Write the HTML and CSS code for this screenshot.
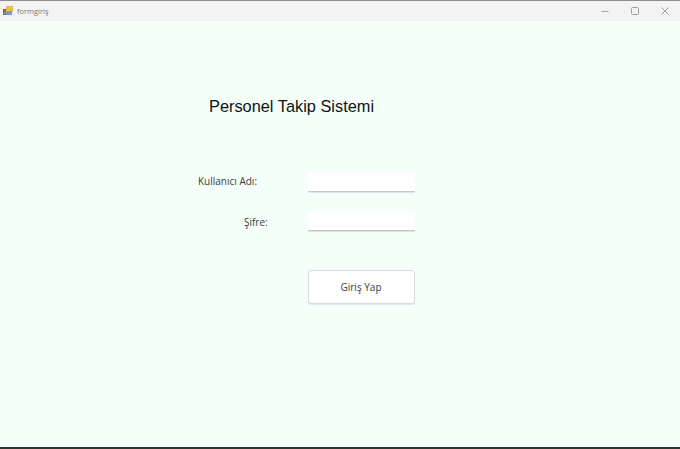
FILE: index.html
```html
<!DOCTYPE html>
<html lang="tr">
<head>
<meta charset="utf-8">
<title>formgiriş</title>
<link rel="stylesheet" href="styles.css">
</head>
<body>
<div class="window">
  <header class="titlebar">
    <div class="title-left">
      <svg class="app-icon" width="10" height="10" viewBox="0 0 10 10">
        <rect x="0" y="3" width="5" height="6" fill="#b5563a"/>
        <rect x="3" y="0" width="7" height="6" fill="#e8c04a"/>
        <rect x="4" y="5" width="5" height="4" fill="#6f9fd4"/>
        <rect x="1" y="6" width="3" height="3" fill="#7d8a95"/>
      </svg>
      <span class="app-name">formgiriş</span>
    </div>
    <div class="controls">
      <svg class="ctl" width="30" height="20" viewBox="0 0 30 20"><path d="M11.5 10.5h7" stroke="#a0a0a0" fill="none"/></svg>
      <svg class="ctl" width="30" height="20" viewBox="0 0 30 20"><rect x="11.5" y="6.5" width="7" height="7" rx="1" stroke="#a0a0a0" fill="none"/></svg>
      <svg class="ctl" width="30" height="20" viewBox="0 0 30 20"><path d="M11.5 6.5l7 7M18.5 6.5l-7 7" stroke="#a0a0a0" fill="none"/></svg>
    </div>
  </header>
  <main class="form">
    <h1 class="heading">Personel Takip Sistemi</h1>
    <div class="row row-user">
      <label class="label label-user">Kullanıcı Adı:</label>
      <input class="field" type="text">
    </div>
    <div class="row row-pass">
      <label class="label label-pass">Şifre:</label>
      <input class="field" type="password">
    </div>
    <button class="submit" type="button">Giriş Yap</button>
  </main>
</div>
</body>
</html>
```
FILE: styles.css
```css
* { box-sizing: border-box; }
html, body { margin: 0; padding: 0; }
body { width: 680px; height: 449px; overflow: hidden; background: #f4fff9; font-family: "Open Sans", "Noto Sans", sans-serif; }
.window { width: 680px; height: 449px; display: flex; flex-direction: column; border-top: 1px solid #8d8d8d; border-bottom: 2px solid #2e3432; }
.titlebar { height: 20px; flex: none; background: #f3f3f3; display: flex; align-items: center; justify-content: space-between; padding-left: 3px; }
.title-left { display: flex; align-items: center; gap: 4px; }
.app-icon { display: block; }
.app-name { font-size: 7.5px; color: #777; }
.controls { display: flex; }
.ctl { display: block; }
.form { flex: 1; display: flex; flex-direction: column; padding-left: 308px; }
.heading { margin: 75px 0 0 -99px; font: 400 16.35px/20px "Liberation Sans", Arial, sans-serif; color: #111; height: 20px; white-space: nowrap; }
.row { display: flex; align-items: center; height: 19px; }
.row-user { margin-top: 57px; }
.row-pass { margin-top: 20px; }
.label { font-size: 10px; color: #3a3a3a; margin-left: -110px; width: 110px; flex: none; }
.label-user { margin-bottom: 4px; }
.label-pass { padding-left: 46px; }
.field { width: 107px; height: 19px; background: #fff; border: 0; border-bottom: 1px solid #c4c6c5; border-radius: 1px; box-shadow: 0 1px 0 #dfe3e1; padding: 0; }
.submit { width: 107px; height: 34px; margin-top: 39px; background: #fff; border: 1px solid #d8dad9; border-radius: 3px; box-shadow: 0 1px 0 #e4e8e6; font: 400 10px "Open Sans", "Noto Sans", sans-serif; color: #3a3a3a; padding: 0 1px 0 0; }
```
